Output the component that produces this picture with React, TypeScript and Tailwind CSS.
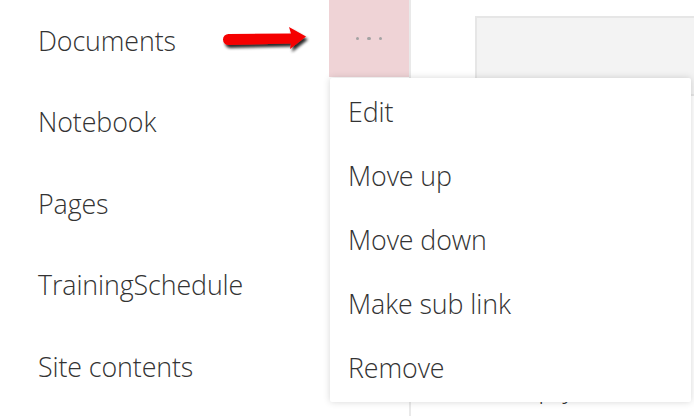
import React from "react";

const navItems = ["Documents", "Notebook", "Pages", "TrainingSchedule", "Site contents"];
const menuItems = ["Edit", "Move up", "Move down", "Make sub link", "Remove"];

function RedArrow() {
  return (
    <svg width="92" height="32" viewBox="0 0 92 32" className="absolute left-[219px] top-[23px]" aria-hidden="true">
      <defs>
        <filter id="arrowShadow" x="-20%" y="-40%" width="140%" height="180%">
          <feGaussianBlur in="SourceAlpha" stdDeviation="1.4" />
          <feOffset dx="2" dy="2.5" result="blur" />
          <feComponentTransfer>
            <feFuncA type="linear" slope="0.85" />
          </feComponentTransfer>
          <feMerge>
            <feMergeNode />
            <feMergeNode in="SourceGraphic" />
          </feMerge>
        </filter>
      </defs>
      <path
        d="M9.5 11 L72 10.5 L70 4 L87 13.5 L71 26 L72 20.5 L9.5 22 A5.5 5.5 0 0 1 9.5 11 Z"
        fill="#f50000"
        filter="url(#arrowShadow)"
      />
    </svg>
  );
}

export default function App() {
  return (
    <div className="relative h-[416px] w-[694px] overflow-hidden bg-white text-[#333333] [font-family:'Open_Sans','Noto_Sans',sans-serif]">
      <div className="flex h-full">
        <nav className="w-[329px] shrink-0">
          {navItems.map((item) => (
            <div key={item} className="flex h-[81.5px] items-center pl-[38px] text-[26.8px] font-[350] tracking-[-0.1px]">
              {item}
            </div>
          ))}
        </nav>

        <div className="w-[82px] shrink-0 border-r-2 border-[#e9e9e9]">
          <div className="flex h-[77px] items-center justify-center gap-[8px] bg-[#efd3d6]">
            <span className="size-[3.5px] rounded-full bg-[#a3a3a3]" />
            <span className="size-[3.5px] rounded-full bg-[#a3a3a3]" />
            <span className="size-[3.5px] rounded-full bg-[#a3a3a3]" />
          </div>
        </div>

        <div className="flex-1 pl-[64px] pt-[16px]">
          <div className="h-[80px] border-2 border-r-0 border-[#e6e6e6] bg-[#f3f3f3]" />
          <p className="mt-[279px] pl-[26px] text-[26px] leading-none font-[350]">Empty</p>
        </div>
      </div>

      <RedArrow />

      <div className="absolute left-[330px] top-[78px] w-[361px] rounded-[2px] bg-white py-[2px] shadow-[0_0_7px_rgba(0,0,0,0.16)]">
        {menuItems.map((item) => (
          <div key={item} className="flex h-[64px] items-center pl-[18px] text-[26.8px] font-[350] tracking-[-0.1px]">
            {item}
          </div>
        ))}
      </div>
    </div>
  );
}
